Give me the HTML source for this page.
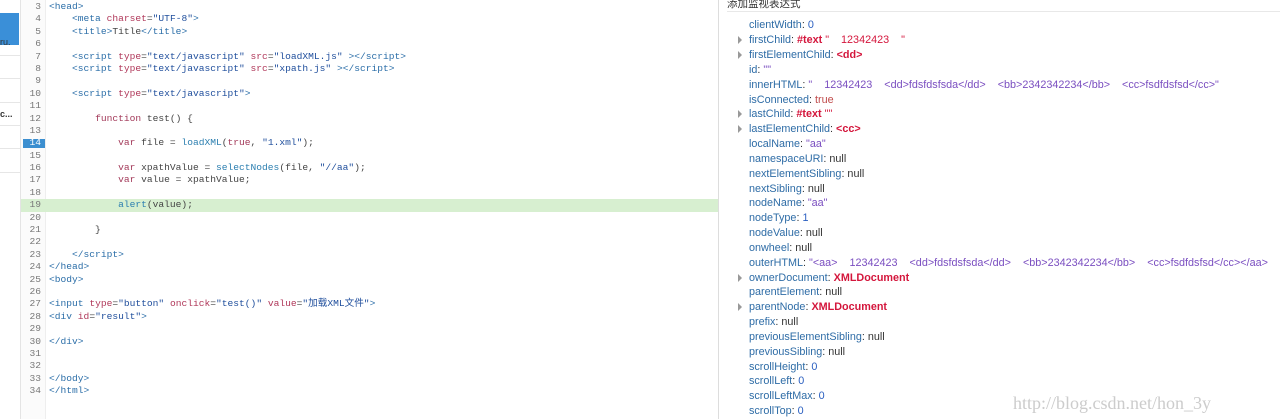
<!DOCTYPE html>
<html><head><meta charset="utf-8"><style>
body{margin:0;width:1280px;height:419px;overflow:hidden;background:#fff;position:relative;font-family:"Liberation Sans","Noto Sans CJK SC",sans-serif}
.sb{position:absolute;left:0;top:0;width:20px;height:419px;background:#fff;border-right:1px solid #e4e4e4}
.sb .blk{position:absolute;left:0;top:13px;width:19px;height:32px;background:#3a8fd8}
.sb .ln{position:absolute;left:0;width:20px;border-top:1px solid #e6e6e6}
.sb .t{position:absolute;left:0;font-size:9px;color:#333}
.gut{position:absolute;left:21px;top:0;width:24px;height:419px;background:#fbfbfb;border-right:1px solid #eee}
.code{position:absolute;left:21px;top:0;width:697px;font-family:"Liberation Mono",monospace;font-size:9.6px;color:#444}
.l{height:12.4px;line-height:12.4px;white-space:pre;position:relative}
.n{display:inline-block;width:20px;text-align:right;color:#777;margin-right:8px}
.hl{background:#d7efd0}
.bp{position:absolute;left:2px;top:2px;width:22px;height:9px;background:#3c8fd0}
.tg{color:#2b6ea8}.at{color:#b0385a}.s{color:#1f4e9c}.k{color:#a33a5a}.f{color:#2c7fb0}.p{color:#333}
.rp{position:absolute;left:718px;top:0;width:562px;height:419px;border-left:1px solid #ddd;font-size:10.8px}
.hdr{position:absolute;left:8px;top:-4px;font-size:10.5px;color:#333}
.hline{position:absolute;left:8px;top:11px;right:0;border-top:1px solid #e8e8e8}
.prs{position:absolute;left:0;top:2px;width:100%}
.pr{position:absolute;left:30px;white-space:pre;color:#333}
.pr .nm{color:#2e6ca6}.num{color:#2a5fc0}.str{color:#7a4ec0}.red{color:#d4163c;font-weight:bold}.tr{color:#c04a4a}
.arr{position:absolute;left:-11px;top:2px;width:0;height:0;border-left:4px solid #999;border-top:4px solid transparent;border-bottom:4px solid transparent}
.wm{position:absolute;left:1013px;top:393px;font-family:"Liberation Serif",serif;font-size:18px;color:#ccc}
</style></head><body>
<div class="sb"><div class="blk"></div>
<div class="t" style="top:37px">ru.</div>
<div class="ln" style="top:55px"></div><div class="ln" style="top:78px"></div><div class="ln" style="top:102px"></div>
<div class="t" style="top:109px;font-weight:bold">c...</div>
<div class="ln" style="top:125px"></div><div class="ln" style="top:148px"></div><div class="ln" style="top:172px"></div></div>
<div class="gut"></div>
<div class="code" style="top:1px">
<div class="l"><span class="n">3</span><span class="tg">&lt;head&gt;</span></div>
<div class="l"><span class="n">4</span>    <span class="tg">&lt;meta</span> <span class="at">charset</span>=<span class="s">"UTF-8"</span><span class="tg">&gt;</span></div>
<div class="l"><span class="n">5</span>    <span class="tg">&lt;title&gt;</span>Title<span class="tg">&lt;/title&gt;</span></div>
<div class="l"><span class="n">6</span></div>
<div class="l"><span class="n">7</span>    <span class="tg">&lt;script</span> <span class="at">type</span>=<span class="s">"text/javascript"</span> <span class="at">src</span>=<span class="s">"loadXML.js"</span> <span class="tg">&gt;&lt;/script&gt;</span></div>
<div class="l"><span class="n">8</span>    <span class="tg">&lt;script</span> <span class="at">type</span>=<span class="s">"text/javascript"</span> <span class="at">src</span>=<span class="s">"xpath.js"</span> <span class="tg">&gt;&lt;/script&gt;</span></div>
<div class="l"><span class="n">9</span></div>
<div class="l"><span class="n">10</span>    <span class="tg">&lt;script</span> <span class="at">type</span>=<span class="s">"text/javascript"</span><span class="tg">&gt;</span></div>
<div class="l"><span class="n">11</span></div>
<div class="l"><span class="n">12</span>        <span class="k">function</span> test() {</div>
<div class="l"><span class="n">13</span></div>
<div class="l"><div class="bp"></div><span class="n" style="color:#fff;position:relative">14</span>            <span class="k">var</span> file = <span class="f">loadXML</span>(<span class="k">true</span>, <span class="s">"1.xml"</span>);</div>
<div class="l"><span class="n">15</span></div>
<div class="l"><span class="n">16</span>            <span class="k">var</span> xpathValue = <span class="f">selectNodes</span>(file, <span class="s">"//aa"</span>);</div>
<div class="l"><span class="n">17</span>            <span class="k">var</span> value = xpathValue;</div>
<div class="l"><span class="n">18</span></div>
<div class="l hl"><span class="n">19</span>            <span class="f">alert</span>(value);</div>
<div class="l"><span class="n">20</span></div>
<div class="l"><span class="n">21</span>        }</div>
<div class="l"><span class="n">22</span></div>
<div class="l"><span class="n">23</span>    <span class="tg">&lt;/script&gt;</span></div>
<div class="l"><span class="n">24</span><span class="tg">&lt;/head&gt;</span></div>
<div class="l"><span class="n">25</span><span class="tg">&lt;body&gt;</span></div>
<div class="l"><span class="n">26</span></div>
<div class="l"><span class="n">27</span><span class="tg">&lt;input</span> <span class="at">type</span>=<span class="s">"button"</span> <span class="at">onclick</span>=<span class="s">"test()"</span> <span class="at">value</span>=<span class="s">"加载XML文件"</span><span class="tg">&gt;</span></div>
<div class="l"><span class="n">28</span><span class="tg">&lt;div</span> <span class="at">id</span>=<span class="s">"result"</span><span class="tg">&gt;</span></div>
<div class="l"><span class="n">29</span></div>
<div class="l"><span class="n">30</span><span class="tg">&lt;/div&gt;</span></div>
<div class="l"><span class="n">31</span></div>
<div class="l"><span class="n">32</span></div>
<div class="l"><span class="n">33</span><span class="tg">&lt;/body&gt;</span></div>
<div class="l"><span class="n">34</span><span class="tg">&lt;/html&gt;</span></div>
</div>
<div class="rp">
<div class="hdr">添加监视表达式</div><div class="hline"></div>
<div class="prs">
<div class="pr" style="top:17px"><span class="nm">clientWidth</span>: <span class="num">0</span></div>
<div class="pr" style="top:32px"><i class="arr"></i><span class="nm">firstChild</span>: <span class="red">#text</span> <span class="red" style="font-weight:normal">"    12342423    "</span></div>
<div class="pr" style="top:47px"><i class="arr"></i><span class="nm">firstElementChild</span>: <span class="red">&lt;dd&gt;</span></div>
<div class="pr" style="top:62px"><span class="nm">id</span>: <span class="str">""</span></div>
<div class="pr" style="top:77px"><span class="nm">innerHTML</span>: <span class="str">"    12342423    &lt;dd&gt;fdsfdsfsda&lt;/dd&gt;    &lt;bb&gt;2342342234&lt;/bb&gt;    &lt;cc&gt;fsdfdsfsd&lt;/cc&gt;"</span></div>
<div class="pr" style="top:92px"><span class="nm">isConnected</span>: <span class="tr">true</span></div>
<div class="pr" style="top:106px"><i class="arr"></i><span class="nm">lastChild</span>: <span class="red">#text</span> <span class="red" style="font-weight:normal">""</span></div>
<div class="pr" style="top:121px"><i class="arr"></i><span class="nm">lastElementChild</span>: <span class="red">&lt;cc&gt;</span></div>
<div class="pr" style="top:136px"><span class="nm">localName</span>: <span class="str">"aa"</span></div>
<div class="pr" style="top:151px"><span class="nm">namespaceURI</span>: null</div>
<div class="pr" style="top:166px"><span class="nm">nextElementSibling</span>: null</div>
<div class="pr" style="top:181px"><span class="nm">nextSibling</span>: null</div>
<div class="pr" style="top:195px"><span class="nm">nodeName</span>: <span class="str">"aa"</span></div>
<div class="pr" style="top:210px"><span class="nm">nodeType</span>: <span class="num">1</span></div>
<div class="pr" style="top:225px"><span class="nm">nodeValue</span>: null</div>
<div class="pr" style="top:240px"><span class="nm">onwheel</span>: null</div>
<div class="pr" style="top:255px"><span class="nm">outerHTML</span>: <span class="str">"&lt;aa&gt;    12342423    &lt;dd&gt;fdsfdsfsda&lt;/dd&gt;    &lt;bb&gt;2342342234&lt;/bb&gt;    &lt;cc&gt;fsdfdsfsd&lt;/cc&gt;&lt;/aa&gt;</span></div>
<div class="pr" style="top:270px"><i class="arr"></i><span class="nm">ownerDocument</span>: <span class="red">XMLDocument</span></div>
<div class="pr" style="top:284px"><span class="nm">parentElement</span>: null</div>
<div class="pr" style="top:299px"><i class="arr"></i><span class="nm">parentNode</span>: <span class="red">XMLDocument</span></div>
<div class="pr" style="top:314px"><span class="nm">prefix</span>: null</div>
<div class="pr" style="top:329px"><span class="nm">previousElementSibling</span>: null</div>
<div class="pr" style="top:344px"><span class="nm">previousSibling</span>: null</div>
<div class="pr" style="top:359px"><span class="nm">scrollHeight</span>: <span class="num">0</span></div>
<div class="pr" style="top:373px"><span class="nm">scrollLeft</span>: <span class="num">0</span></div>
<div class="pr" style="top:388px"><span class="nm">scrollLeftMax</span>: <span class="num">0</span></div>
<div class="pr" style="top:403px"><span class="nm">scrollTop</span>: <span class="num">0</span></div>
</div>
</div>
<div class="wm">http://blog.csdn.net/hon_3y</div>
</body></html>
